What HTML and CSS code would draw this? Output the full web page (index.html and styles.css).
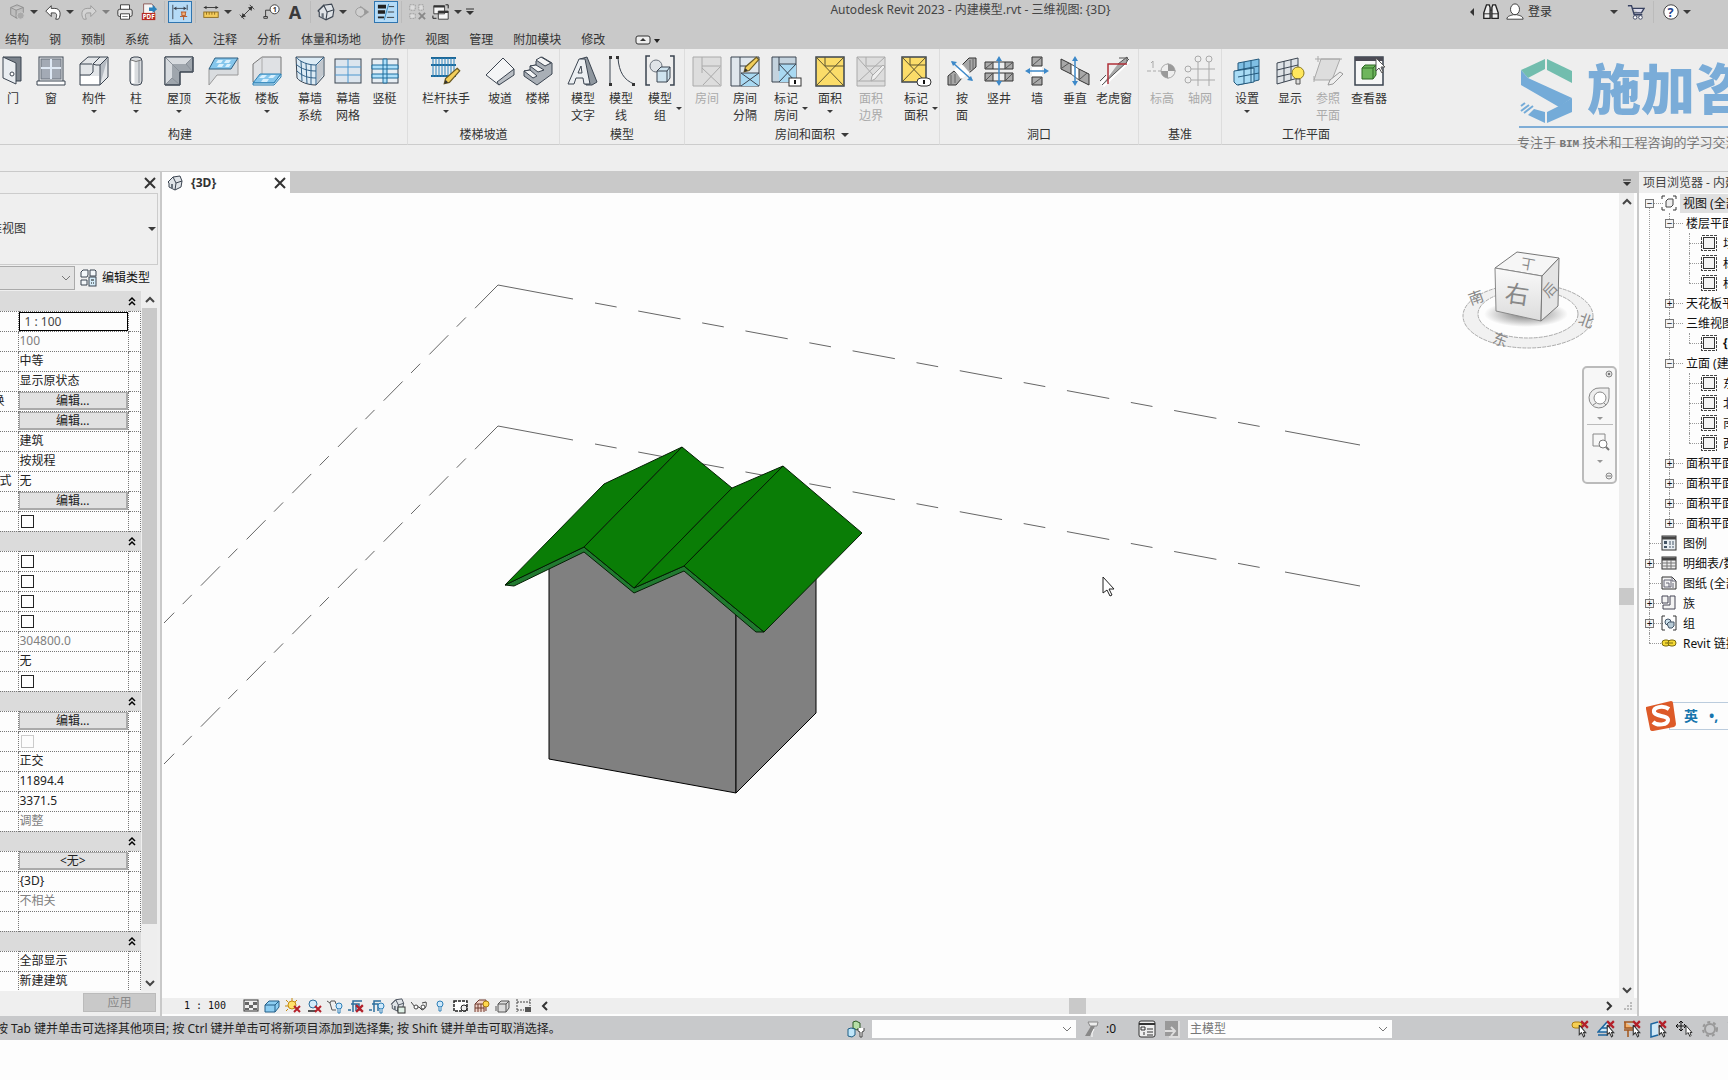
FILE: index.html
```html
<!DOCTYPE html>
<html lang="zh-CN">
<head>
    <meta charset="UTF-8">
    <meta name="viewport" content="width=device-width, initial-scale=1.0">
    <title>Autodesk Revit 2023 - 内建模型.rvt - 三维视图: {3D}</title>
    <link rel="stylesheet" href="styles.css">
</head>
<body>
    <!-- Shared shapes -->
    <svg class="sprite" aria-hidden="true">
        <symbol id="caret" viewBox="0 0 8 6"><path d="M0 1h8L4 5z" fill="#3a3a3a"/></symbol>
        <symbol id="close" viewBox="0 0 12 12"><path d="M1 1l10 10M11 1L1 11" stroke="#333" stroke-width="2" fill="none"/></symbol>
        <symbol id="up" viewBox="0 0 12 12"><path d="M2 8l4-4 4 4" stroke="#444" stroke-width="2" fill="none"/></symbol>
        <symbol id="down" viewBox="0 0 12 12"><path d="M2 4l4 4 4-4" stroke="#444" stroke-width="2" fill="none"/></symbol>
        <symbol id="right" viewBox="0 0 12 12"><path d="M4 2l4 4-4 4" stroke="#333" stroke-width="2" fill="none"/></symbol>
        <symbol id="left" viewBox="0 0 12 12"><path d="M8 2L4 6l4 4" stroke="#333" stroke-width="2" fill="none"/></symbol>
        <symbol id="fold" viewBox="0 0 8 10"><path d="M1 5l3-3 3 3M1 9l3-3 3 3" stroke="#000" stroke-width="1.5" fill="none"/></symbol>
        <symbol id="combo" viewBox="0 0 10 6"><path d="M1 1l4 4 4-4" stroke="#777" fill="none"/></symbol>
        <symbol id="pencil" viewBox="0 0 14 14"><path d="M11 1l2 2-8 9-4 1 1-4z" fill="#f2ce5a" stroke="#6b5a24"/><path d="M1 13l1-3 2 2z" fill="#333"/></symbol>
        <symbol id="house" viewBox="0 0 16 16"><path d="M1 7l5-5 7-1 2 5-1 6-6 3-6-3V8z" fill="#dfe3e7" stroke="#3b4450"/><path d="M1 7l5-5 3 6-1 7M9 8l6-2" fill="none" stroke="#3b4450"/><path d="M4 9h2v5l-2-1z" fill="#69727c"/></symbol>
        <symbol id="cross" viewBox="0 0 8 8"><path d="M1 1l6 6M7 1L1 7" stroke="#b3202a" stroke-width="2" fill="none"/></symbol>
        <symbol id="pointer" viewBox="0 0 8 12"><path d="M1 0v9l2-2 2 4 1-1-1-3h2z" fill="#fff" stroke="#333"/></symbol>
        <symbol id="bulb" viewBox="0 0 8 12"><circle cx="4" cy="4" r="3" fill="#cfe9fb" stroke="#2d7fb8"/><path d="M3 7v4h2V7" fill="#fff" stroke="#2d7fb8"/></symbol>
        <symbol id="plan" viewBox="0 0 16 16"><g shape-rendering="crispEdges"><rect x="0.5" y="0.5" width="15" height="15" fill="none" stroke="#444" stroke-dasharray="3 1"/><rect x="2.5" y="2.5" width="11" height="11" fill="#f4f4f4" stroke="#333"/></g></symbol>
    </svg>

    <header class="titlebar">
        <nav class="quick" aria-label="快速访问工具栏">
            <button aria-label="保存"><svg viewBox="0 0 20 20"><path d="M3 5l7-3 7 3v8l-7 4-7-4zM3 5l6 3 8-3M9 8v9" fill="#bdbdbd" stroke="#8b8b8b"/><circle cx="14" cy="14" r="4" fill="#aaa" stroke="#c9c9c9"/></svg></button>
            <svg class="caret"><use href="#caret"/></svg>
            <button aria-label="放弃"><svg viewBox="0 0 20 20"><path d="M2 9l6-6v3h4c7 0 7 8 4 12h-3c2-5 1-7-2-7H8v4z" fill="#fff" stroke="#333"/></svg></button>
            <svg class="caret"><use href="#caret"/></svg>
            <button aria-label="重做"><svg viewBox="0 0 20 20"><path d="M18 9l-6-6v3H8c-7 0-7 8-4 12h3c-2-5-1-7 2-7h3v4z" fill="#d4d4d4" stroke="#999"/></svg></button>
            <svg class="caret faded"><use href="#caret"/></svg>
            <button aria-label="打印"><svg viewBox="0 0 20 20"><path d="M5 7V2h10v5" fill="#fff" stroke="#333"/><rect x="2" y="7" width="16" height="8" rx="2" fill="#e6e6e6" stroke="#333"/><path d="M5 12h10v6H5z" fill="#fff" stroke="#333"/><path d="M7 15h6" stroke="#777"/></svg></button>
            <button aria-label="导出 PDF"><svg viewBox="0 0 20 20"><path d="M4 1h9l3 3v8H4z" fill="#f5f5f5" stroke="#8a5550"/><path d="M10 5h4V2l5 5-5 4V9h-4z" fill="#2b83bd"/><rect x="2" y="11" width="15" height="8" fill="#b92b20"/><text x="3" y="18" font-size="7" font-weight="700" fill="#fff">PDF</text></svg></button>
            <i class="sep"></i>
            <button class="on" aria-label="激活尺寸"><svg viewBox="0 0 20 20"><path d="M2 2v16M18 2v6M3 6h14" stroke="#3b4450" fill="none"/><path d="M3 6l3-2v4zM17 6l-3-2v4z" fill="#3b4450"/><path d="M11 10h6M12 10v4h4v-4M10 15h8M14 15v4" stroke="#b5541e" fill="#f5b27b"/></svg></button>
            <i class="sep"></i>
            <button aria-label="测量"><svg viewBox="0 0 20 20"><path d="M2 5h16" stroke="#333"/><path d="M2 5l3-2v4zM18 5l-3-2v4z" fill="#333"/><rect x="2" y="10" width="16" height="6" fill="#f3cb5c" stroke="#8c6a1d"/><path d="M5 10v3M8 10v3M11 10v3M14 10v3" stroke="#8c6a1d"/></svg></button>
            <svg class="caret"><use href="#caret"/></svg>
            <button aria-label="对齐尺寸标注"><svg viewBox="0 0 20 20"><path d="M4 16L16 4M2 13l5 5M13 2l5 5" stroke="#333" fill="none"/><path d="M4 16l1-5 4 4zM16 4l-5 1 4 4z" fill="#333"/></svg></button>
            <button aria-label="按类别标记"><svg viewBox="0 0 20 20"><circle cx="14" cy="7" r="5" fill="#fff" stroke="#333"/><text x="12" y="10" font-size="8" font-weight="700" fill="#333">1</text><path d="M9 8H4v7M2 15h4v2H2z" stroke="#333" fill="none"/></svg></button>
            <button class="letter" aria-label="文字">A</button>
            <i class="sep"></i>
            <button aria-label="默认三维视图"><svg viewBox="0 0 16 16"><use href="#house"/></svg></button>
            <svg class="caret"><use href="#caret"/></svg>
            <button aria-label="剖面"><svg viewBox="0 0 20 20"><path d="M8 3l10 7-10 7z" fill="#999"/><circle cx="8" cy="10" r="5" fill="#cfcfcf" stroke="#999"/></svg></button>
            <button class="on" aria-label="细线"><svg viewBox="0 0 20 20"><path d="M1 4h9M1 10h8" stroke="#222" stroke-width="4"/><path d="M1 16h7" stroke="#222" stroke-width="2"/><path d="M13 4h6M12 10h7M11 16h8" stroke="#333"/><path d="M13 1L8 19" stroke="#2b83bd"/></svg></button>
            <i class="sep"></i>
            <button aria-label="关闭非活动视图"><svg viewBox="0 0 20 20"><path d="M2 2h6v6H2zM12 2h5v6h-5zM2 12h6v5H2z" fill="#ddd" stroke="#999" stroke-dasharray="2 1"/><path d="M12 11l7 7M19 11l-7 7" stroke="#888" stroke-width="2"/></svg></button>
            <button aria-label="切换窗口"><svg viewBox="0 0 20 20"><path d="M2 3h12v9H2zM7 9h11v9H7z" fill="#f6f6f6" stroke="#333"/><path d="M2 4h12M7 10h11" stroke="#333" stroke-width="2"/><path d="M15 2h3v4M1 14v3h4" stroke="#111" fill="none"/></svg></button>
            <svg class="caret"><use href="#caret"/></svg>
            <svg class="more" viewBox="0 0 10 8"><path d="M1 1h8" stroke="#333"/><path d="M1 3h8L5 7z" fill="#333"/></svg>
        </nav>
        <h1>Autodesk Revit 2023 - 内建模型.rvt - 三维视图: {3D}</h1>
        <div class="account">
            <svg class="tri" viewBox="0 0 6 8"><path d="M5 0v8L1 4z" fill="#333"/></svg>
            <button aria-label="搜索"><svg viewBox="0 0 20 20"><path d="M4 5l1-3h3l1 3v12H2v-6zM16 5l-1-3h-3l-1 3v12h7v-6z" fill="#eee" stroke="#222" stroke-width="1.5"/><path d="M9 8h2M2 12h7M11 12h7" stroke="#222"/></svg></button>
            <button aria-label="用户"><svg viewBox="0 0 20 20"><path d="M1 18c0-4 5-4 7-5h4c2 1 7 1 7 5z" fill="#fff" stroke="#333"/><ellipse cx="10" cy="7" rx="5" ry="6" fill="#fff" stroke="#333"/></svg></button>
            <a href="#login">登录</a>
            <svg class="caret"><use href="#caret"/></svg>
            <button aria-label="应用商店"><svg viewBox="0 0 20 20"><path d="M1 3h4l3 10h9M6 6h13l-3 5H7" fill="#dde" stroke="#37415f" stroke-width="1.5"/><circle cx="9" cy="16" r="2" fill="#fff" stroke="#37415f"/><circle cx="15" cy="16" r="2" fill="#fff" stroke="#37415f"/></svg></button>
            <i class="sep"></i>
            <button aria-label="帮助"><svg viewBox="0 0 20 20"><circle cx="10" cy="10" r="8" fill="#fff" stroke="#333"/><text x="6" y="15" font-size="14" font-weight="700" fill="#26438c">?</text></svg></button>
            <svg class="caret"><use href="#caret"/></svg>
        </div>
    </header>

    <nav class="tabs" aria-label="功能区选项卡">
        <a href="#structure">结构</a><a href="#steel">钢</a><a href="#precast">预制</a><a href="#systems">系统</a><a href="#insert">插入</a><a href="#annotate">注释</a><a href="#analyze">分析</a><a href="#massing">体量和场地</a><a href="#collaborate">协作</a><a href="#view">视图</a><a href="#manage">管理</a><a href="#addins">附加模块</a><a href="#modify">修改</a>
        <button class="minimize" aria-label="最小化功能区"><svg viewBox="0 0 26 10"><rect x="1" y="1" width="14" height="8" rx="2" fill="#eee" stroke="#333"/><path d="M5 6l3-3 3 3z" fill="#333"/><path d="M19 4h6l-3 4z" fill="#222"/></svg></button>
    </nav>

    <section class="ribbon" aria-label="功能区">
        <div class="panel build">
            <div class="tools">
                <button><svg viewBox="0 0 32 32"><path d="M6 2h18v24h-6" fill="#7c848d" stroke="#3b4450"/><path d="M6 2l13 6v21L6 23z" fill="#e9edf1" stroke="#3b4450"/><circle cx="15" cy="19" r="2" fill="#fff" stroke="#3b4450"/></svg>门</button>
                <button><svg viewBox="0 0 32 32"><rect x="4" y="2" width="24" height="25" fill="#eceff2" stroke="#3b4450"/><rect x="6" y="4" width="20" height="20" fill="#a3aab5" stroke="#6b737d"/><path d="M16 4v20M6 13h20" stroke="#dfe9f5" stroke-width="2"/><path d="M2 26h28v4H2z" fill="#fff" stroke="#3b4450"/></svg>窗</button>
                <button><svg viewBox="0 0 32 32"><path d="M2 9l8-7h20v20l-8 8H2z" fill="#e3e6e9" stroke="#3b4450"/><path d="M22 30V10l8-8" fill="#b5bbc2" stroke="#3b4450"/><path d="M2 20h10l3-3V9l7-7M15 9l3 1h4M2 9h12" fill="none" stroke="#3b4450"/><path d="M3 21h18v8H3z" fill="#fff"/></svg>构件<svg class="drop"><use href="#caret"/></svg></button>
                <button><svg viewBox="0 0 32 32"><rect x="10" y="2" width="12" height="28" rx="4" fill="#d9dcdf" stroke="#3b4450"/><path d="M13 6v22" stroke="#fff" stroke-width="3"/><path d="M19 6v22" stroke="#b1b6bc" stroke-width="2"/><path d="M11 5q5 3 10 0" fill="none" stroke="#777"/></svg>柱<svg class="drop"><use href="#caret"/></svg></button>
                <button><svg viewBox="0 0 32 32"><path d="M2 2h28v15H17v13H2z" fill="#9fa6ad" stroke="#3b4450"/><path d="M2 2h28l-7 7H9v14l-7 7z" fill="#d7dbdf"/><path d="M2 2l15 15M2 30l7-7 8 7M30 2l-7 7 7 8" fill="none" stroke="#8a9199"/><path d="M2 2h28v15H17v13H2z" fill="none" stroke="#3b4450"/></svg>屋顶<svg class="drop"><use href="#caret"/></svg></button>
                <button><svg viewBox="0 0 32 32"><path d="M2 14v16l8-10h21V3" fill="#d9dcdf" stroke="#999"/><path d="M8 3h23l-7 11H2z" fill="#85c6ec" stroke="#2f5f80"/><path d="M11 5h5l-2 3h-5zM19 5h5l-2 3h-5zM12 9h5l-2 3h-5zM20 9h4l-2 3h-4z" fill="#d9f0fd"/></svg>天花板</button>
                <button><svg viewBox="0 0 32 32"><path d="M2 9l9-7h19v17l-7 8H2z" fill="#dfe1e4" stroke="#777"/><path d="M11 2v17" stroke="#aaa"/><path d="M9 19h21l-7 9H2z" fill="#85c6ec" stroke="#2b7fb2"/><path d="M2 28v2h21l7-8v-3l-7 9z" fill="#d3eefc" stroke="#2b7fb2"/><path d="M11 20h5l-3 3h-5zM20 20h5l-3 3h-5zM12 24h6l-2 3h-6z" fill="#d9f0fd"/></svg>楼板<svg class="drop"><use href="#caret"/></svg></button>
                <button><svg viewBox="0 0 32 32"><path d="M2 2h28v19l-8 9C14 30 6 27 3 23z" fill="#dcebf5" stroke="#3b4450"/><path d="M2 2c4 5 12 8 20 8v20M30 2l-8 8M2 9c5 5 12 7 20 7M3 16c5 5 11 7 19 7M7 6l1 20M12 8l1 21M17 10v20" fill="none" stroke="#2f5f86"/><path d="M23 10l6-6v16l-6 8z" fill="#c2c7cd"/></svg>幕墙<br>系统</button>
                <button><svg viewBox="0 0 32 32"><rect x="3" y="4" width="26" height="24" fill="#dce5ee" stroke="#3b4450"/><path d="M16 4v24M3 12h26M3 20h26" stroke="#4c97cf"/></svg>幕墙<br>网格</button>
                <button><svg viewBox="0 0 32 32"><rect x="3" y="4" width="26" height="24" fill="#e8eef3" stroke="#3b4450"/><path d="M3 10h26v4H3zM3 19h26v4H3zM14 4h4v24h-4z" fill="#aee0fa" stroke="#1f6d9c"/></svg>竖梃</button>
            </div>
            <h2>构建</h2>
        </div>
        <div class="panel stair">
            <div class="tools">
                <button><svg viewBox="0 0 32 32"><path d="M1 3h25M1 10h25M1 21h25" stroke="#1d6797" stroke-width="2"/><path d="M3 3v19M6 3v19M9 3v19M12 3v19M15 3v19M18 3v19M21 3v19M24 3v19" stroke="#2b83bd"/><use href="#pencil" x="13" y="12" width="18" height="18"/></svg>栏杆扶手<svg class="drop"><use href="#caret"/></svg></button>
                <button><svg viewBox="0 0 32 32"><path d="M2 20L19 3l11 11-15 16z" fill="#f4f5f6" stroke="#3b4450"/><path d="M30 14v6L15 30l-2-3z" fill="#b9bec4" stroke="#3b4450"/></svg>坡道</button>
                <button><svg viewBox="0 0 32 32"><path d="M2 16l6-1v-4l6-1V6l6-4 10 6v11L15 30l-13-9z" fill="#a9afb6" stroke="#3b4450"/><path d="M14 5l5-3 10 6-6 3zM8 11l6-1 8 5-6 2zM2 16l6-1 7 6-4 2z" fill="#f4f5f6" stroke="#3b4450"/></svg>楼梯</button>
            </div>
            <h2>楼梯坡道</h2>
        </div>
        <div class="panel model">
            <div class="tools">
                <button><svg viewBox="0 0 32 32"><path d="M13 4l7-2 10 25-5 3h-6z" fill="#8f979f" stroke="#3b4450"/><path d="M1 29L12 4h6l5 25h-6l-1-6H9l-2 6zM11 18h4l-1-7z" fill="#eceff2" stroke="#3b4450" fill-rule="evenodd"/></svg>模型<br>文字</button>
                <button><svg viewBox="0 0 32 32"><path d="M5 3v26M13 3c1 14 6 22 16 26" fill="none" stroke="#3b4450"/><path d="M4 1h3v3H4zM4 28h3v3H4zM11 1h3v3h-3zM27 28h3v3h-3z" fill="#333"/></svg>模型<br>线</button>
                <button class="split"><svg viewBox="0 0 32 32"><path d="M6 1H2v29h4M26 1h4v29h-4" fill="none" stroke="#3b4450" stroke-width="1.5"/><circle cx="12" cy="11" r="6" fill="#dfe3e7" stroke="#6b737d"/><path d="M13 16l4-4h9v11l-3 4H13z" fill="#cfe3ee" stroke="#3b4450"/><path d="M13 16h10v11M23 16l3-4" fill="none" stroke="#3b4450"/></svg><span class="two"><span>模型<br>组</span><svg class="drop"><use href="#caret"/></svg></span></button>
            </div>
            <h2>模型</h2>
        </div>
        <div class="panel room">
            <div class="tools">
                <button disabled><svg viewBox="0 0 32 32"><path d="M2 2h28v29H2z" fill="#ddd" stroke="#aaa"/><path d="M11 2v16M11 11h19M11 13l18 17M29 12L12 30" fill="none" stroke="#aaa"/></svg>房间</button>
                <button><svg viewBox="0 0 32 32"><path d="M2 2h28v29H2z" fill="#dfe6ec" stroke="#3b4450"/><path d="M12 18h18v13H12z" fill="#a9d9f2"/><path d="M11 2v29M11 11h6M12 18h18M12 18l18 13M30 18L12 31" fill="none" stroke="#3b4450"/><use href="#pencil" x="14" y="1" width="17" height="17"/></svg>房间<br>分隔</button>
                <button class="split"><svg viewBox="0 0 32 32"><path d="M2 2h24v25H2z" fill="#c4d3de" stroke="#3b4450"/><path d="M9 9h17v18H9z" fill="#a9d9f2"/><path d="M9 2v14M9 9h17M9 9l17 18M26 9L9 27" fill="none" stroke="#3b4450"/><rect x="19" y="23" width="12" height="8" fill="#fff" stroke="#333"/><path d="M25 25v4" stroke="#111" stroke-width="2"/></svg><span class="two"><span>标记<br>房间</span><svg class="drop"><use href="#caret"/></svg></span></button>
                <button><svg viewBox="0 0 32 32"><path d="M2 2h28v29H2z" fill="#fbdc69" stroke="#3b4450" stroke-width="1.5"/><path d="M2 2l28 29M30 2L2 31M11 2v9M11 11h19" fill="none" stroke="#5d5430"/></svg>面积<svg class="drop"><use href="#caret"/></svg></button>
                <button disabled><svg viewBox="0 0 32 32"><path d="M2 2h28v29H2z" fill="#ddd" stroke="#aaa"/><path d="M2 2l16 18M30 2L4 26M11 2v9h19M2 26h28" fill="none" stroke="#aaa"/><path d="M28 10l2 2-10 12-4 2 1-5z" fill="#eee" stroke="#aaa"/></svg>面积<br>边界</button>
                <button class="split"><svg viewBox="0 0 32 32"><path d="M2 2h24v25H2z" fill="#fbdc69" stroke="#3b4450" stroke-width="1.5"/><path d="M2 2l24 25M26 2L2 27M10 2v8h16" fill="none" stroke="#5d5430"/><rect x="17" y="23" width="14" height="8" rx="4" fill="#fff" stroke="#333"/><path d="M24 25v4" stroke="#111" stroke-width="2"/></svg><span class="two"><span>标记<br>面积</span><svg class="drop"><use href="#caret"/></svg></span></button>
            </div>
            <h2>房间和面积 <svg class="caret"><use href="#caret"/></svg></h2>
        </div>
        <div class="panel opening">
            <div class="tools">
                <button><svg viewBox="0 0 32 32"><path d="M30 3v9l-7 6-7-8 7-7zM2 30v-9l6-5 8 7-6 7z" fill="#a7a7a7" stroke="#333"/><path d="M24 5v10M27 4v10M5 20v9M9 19v9" stroke="#666"/><path d="M8 15l8-6 8 9-9 6z" fill="#fff"/><path d="M6 7l20 18" stroke="#3d89c9" stroke-width="1.5"/><path d="M5 6l6 1-4 4zM27 26l-6-1 4-4z" fill="#3d89c9"/></svg>按<br>面</button>
                <button><svg viewBox="0 0 32 32"><path d="M2 7h8v7H2zM22 7h8v7h-8zM2 18h8v8H2zM22 18h8v8h-8z" fill="#aaa" stroke="#333"/><path d="M10 7h12M10 14h12M10 18h12M10 26h12" stroke="#333"/><path d="M3 13l6-5M23 13l6-5M3 25l6-6M23 25l6-6" stroke="#555"/><path d="M16 3v26" stroke="#3d89c9" stroke-width="1.5"/><path d="M16 1l3 5h-6zM16 31l3-5h-6z" fill="#3d89c9"/></svg>竖井</button>
                <button><svg viewBox="0 0 32 32"><path d="M11 2h10v28H11z" fill="#fff"/><path d="M11 2h10v9H11zM11 22h10v8H11z" fill="#aaa" stroke="#333"/><path d="M12 10l8-7M12 29l8-6" stroke="#555"/><path d="M6 16h20" stroke="#3d89c9" stroke-width="1.5"/><path d="M4 16l5-3v6zM28 16l-5-3v6z" fill="#3d89c9"/></svg>墙</button>
                <button><svg viewBox="0 0 32 32"><path d="M2 4l28 14v12L2 14z" fill="#fff"/><path d="M2 4l10 5v10L2 14zM20 14l10 5v11l-10-5z" fill="#a7a7a7" stroke="#333"/><path d="M3 13l7-5M21 24l7-6M12 9l8 5M12 19l8 6" stroke="#555"/><path d="M16 3v26" stroke="#3d89c9" stroke-width="1.5"/><path d="M16 1l3 5h-6zM16 31l3-5h-6z" fill="#3d89c9"/></svg>垂直</button>
                <button><svg viewBox="0 0 32 32"><path d="M4 30L30 5" stroke="#fff" stroke-width="6"/><path d="M22 9l7-7M26 9l5-5M2 26l6-6M21 3h9L13 20" stroke="#555" fill="none"/><path d="M20 9l9-7v5L4 30" fill="#a7a7a7" stroke="#555"/><path d="M10 29V9h19" fill="none" stroke="#b03039" stroke-width="1.5"/></svg>老虎窗</button>
            </div>
            <h2>洞口</h2>
        </div>
        <div class="panel datum">
            <div class="tools">
                <button disabled><svg viewBox="0 0 32 32"><path d="M1 16h4M7 16h3M12 16h18M7 6v7M5 8l2-2M22 8v16" stroke="#aaa" fill="none"/><circle cx="22" cy="16" r="7" fill="#eee" stroke="#aaa"/><path d="M22 16V9a7 7 0 0 1 7 7zM22 16v7a7 7 0 0 1-7-7z" fill="#999"/></svg>标高</button>
                <button disabled><svg viewBox="0 0 32 32"><path d="M14 7v24M25 7v24M7 14h24M7 25h24" stroke="#aaa"/><g fill="#eee" stroke="#aaa"><circle cx="14" cy="4" r="3"/><circle cx="25" cy="4" r="3"/><circle cx="4" cy="14" r="3"/><circle cx="4" cy="25" r="3"/></g></svg>轴网</button>
            </div>
            <h2>基准</h2>
        </div>
        <div class="panel plane">
            <div class="tools">
                <button><svg viewBox="0 0 32 32"><path d="M7 8l21-4v21L7 30z" fill="#7fbfe4" stroke="#24597c"/><path d="M3 16l20-3v14L6 30l-3-3z" fill="#a9dcf5" stroke="#24597c"/><path d="M13 7v22M20 5v22M7 15l21-4M7 22l21-4" stroke="#24597c"/></svg>设置<svg class="drop"><use href="#caret"/></svg></button>
                <button><svg viewBox="0 0 32 32"><path d="M3 8l21-5v20L3 29z" fill="#dfe3e7" stroke="#3b4450"/><path d="M10 6v21M17 5v20M3 15l21-5M3 22l21-5" stroke="#3b4450"/><circle cx="24" cy="18" r="6" fill="#ffe75c" stroke="#8c7a1d"/><path d="M22 24h4v5h-4z" fill="#ddd" stroke="#555"/></svg>显示</button>
                <button disabled><svg viewBox="0 0 32 32"><path d="M9 4h19L20 25H2zM6 1v6M3 4h27M2 21v6" fill="#ddd" stroke="#aaa"/><path d="M28 17l3 2-10 10-5 1 2-5z" fill="#eee" stroke="#999"/></svg>参照<br>平面</button>
                <button><svg viewBox="0 0 32 32"><path d="M2 2h28v28H2z" fill="#f7f7f7" stroke="#3b4450" stroke-width="1.5"/><path d="M2 4h28" stroke="#4b4b55" stroke-width="4"/><path d="M9 13l3-3h11v10l-3 4H9z" fill="#6eb55c" stroke="#2f6b25"/><path d="M9 13h11v11M20 13l3-3" fill="none" stroke="#2f6b25"/><path d="M23 3v13l3-3 3 5 1-1-2-5h4z" fill="#fff" stroke="#555"/></svg>查看器</button>
            </div>
            <h2>工作平面</h2>
        </div>
        <div class="brand">
            <div class="brand-name">
                <svg viewBox="0 0 54 66"><path d="M2 12L26 1v10L9 20z" fill="#72bdae"/><path d="M28 1l25 12v12L28 12z" fill="#72bdae"/><path d="M2 12l7 8 44 20-13 9L2 27z" fill="#74abd8"/><path d="M53 40v14L28 65V54l12-6z" fill="#74abd8"/><path d="M26 54v11l-17-8 6-6z" fill="#74abd8"/><path d="M2 53l8-6M5 55l9-7M2 48l4-3" stroke="#74abd8" stroke-width="2"/></svg>
                <strong>施加咨询</strong>
            </div>
            <p>专注于 <b>BIM</b> 技术和工程咨询的学习交流</p>
        </div>
    </section>

    <main class="workspace">
        <aside class="properties" aria-label="属性">
            <div class="head"><button aria-label="关闭属性"><svg class="x"><use href="#close"/></svg></button></div>
            <button class="type"><span>三维视图</span><svg class="caret"><use href="#caret"/></svg></button>
            <div class="edit-type">
                <span class="combo"><select aria-label="视图实例"><option></option></select><svg><use href="#combo"/></svg></span>
                <button><svg viewBox="0 0 18 18"><path d="M1 3l2-2h5v5l-1 2H1zM10 1h5l1 1v5h-6zM1 11h6v5H1z" fill="#f3f7fa" stroke="#3b4450"/><rect x="9" y="8" width="7" height="9" fill="#d5ecf9" stroke="#3b4450"/><path d="M11 11h3M11 14h1M13 14h1" stroke="#111"/></svg>编辑类型</button>
            </div>
            <div class="grid">
                <table>
                    <colgroup><col class="c-name"><col><col class="c-link"></colgroup>
                    <tr class="group"><th colspan="3"><svg><use href="#fold"/></svg></th></tr>
                    <tr><td></td><td class="field"><input type="text" value="1 : 100" aria-label="视图比例"></td><td></td></tr>
                    <tr><td></td><td class="dim">100</td><td></td></tr>
                    <tr><td></td><td>中等</td><td></td></tr>
                    <tr><td></td><td>显示原状态</td><td></td></tr>
                    <tr><td><span class="name far">可见性/图形替换</span></td><td class="field"><button>编辑...</button></td><td></td></tr>
                    <tr><td></td><td class="field"><button>编辑...</button></td><td></td></tr>
                    <tr><td></td><td>建筑</td><td></td></tr>
                    <tr><td></td><td>按规程</td><td></td></tr>
                    <tr><td><span class="name">默认分析显示样式</span></td><td>无</td><td></td></tr>
                    <tr><td></td><td class="field"><button>编辑...</button></td><td></td></tr>
                    <tr><td></td><td><input type="checkbox" aria-label="日光路径"></td><td></td></tr>
                    <tr class="group"><th colspan="3"><svg><use href="#fold"/></svg></th></tr>
                    <tr><td></td><td><input type="checkbox" aria-label="裁剪视图"></td><td></td></tr>
                    <tr><td></td><td><input type="checkbox" aria-label="裁剪区域可见"></td><td></td></tr>
                    <tr><td></td><td><input type="checkbox" aria-label="注释裁剪"></td><td></td></tr>
                    <tr><td></td><td><input type="checkbox" aria-label="远剪裁激活"></td><td></td></tr>
                    <tr><td></td><td class="dim">304800.0</td><td></td></tr>
                    <tr><td></td><td>无</td><td></td></tr>
                    <tr><td></td><td><input type="checkbox" aria-label="剖面框"></td><td></td></tr>
                    <tr class="group"><th colspan="3"><svg><use href="#fold"/></svg></th></tr>
                    <tr><td></td><td class="field"><button>编辑...</button></td><td></td></tr>
                    <tr><td></td><td><input type="checkbox" aria-label="锁定的方向" disabled></td><td></td></tr>
                    <tr><td></td><td>正交</td><td></td></tr>
                    <tr><td></td><td>11894.4</td><td></td></tr>
                    <tr><td></td><td>3371.5</td><td></td></tr>
                    <tr><td></td><td class="dim">调整</td><td></td></tr>
                    <tr class="group"><th colspan="3"><svg><use href="#fold"/></svg></th></tr>
                    <tr><td></td><td class="field"><button>&lt;无&gt;</button></td><td></td></tr>
                    <tr><td></td><td>{3D}</td><td></td></tr>
                    <tr><td></td><td class="dim">不相关</td><td></td></tr>
                    <tr><td></td><td></td><td></td></tr>
                    <tr class="group"><th colspan="3"><svg><use href="#fold"/></svg></th></tr>
                    <tr><td></td><td>全部显示</td><td></td></tr>
                    <tr><td></td><td>新建建筑</td><td></td></tr>
                </table>
                <div class="vscroll"><svg><use href="#up"/></svg><i class="thumb"></i><i class="rest"></i><svg><use href="#down"/></svg></div>
            </div>
            <div class="apply"><button disabled>应用</button></div>
        </aside>

        <section class="view" aria-label="三维视图">
            <div class="viewtabs">
                <div class="viewtab"><svg class="home"><use href="#house"/></svg><b>{3D}</b><button aria-label="关闭视图"><svg class="x"><use href="#close"/></svg></button></div>
                <svg class="more" viewBox="0 0 10 8"><path d="M1 1h8" stroke="#333"/><path d="M1 3h8L5 7z" fill="#333"/></svg>
            </div>
            <div class="stage">
                <div class="canvas">
                    <svg class="drawing" viewBox="162 193 1457 805" preserveAspectRatio="xMinYMin meet">
                        <!-- Reference planes -->
                        <g fill="none" stroke="#666">
                            <path d="M498 285l75 14M1285 431l75 14M498 426l75 14M1285 572l75 14"/>
                            <path d="M595 303l668 124M595 444l668 124" stroke-dasharray="22 22 43 22"/>
                            <path d="M498 285l-4 4M498 426l-4 4"/>
                            <path d="M494 289L164 623M494 430L164 764" stroke-dasharray="27 13 13 12"/>
                        </g>
                        <!-- Walls -->
                        <g fill="#808080" stroke="#000" stroke-linejoin="round">
                            <path d="M549 565l35-18 50 41 50-22 52 43v184l-187-34z"/>
                            <path d="M736 609l80-40v144l-80 80z"/>
                        </g>
                        <!-- Roof -->
                        <g stroke="#041f04" stroke-linejoin="round">
                            <path d="M505 585l79-38 50 41 50-22 80 66h-8l-72-61-50 22-50-41-70 34z" fill="#217a30"/>
                            <g fill="#0a7d06">
                                <path d="M505 585l99-101 78-37-98 100z"/>
                                <path d="M584 547l98-100 50 41-98 100z"/>
                                <path d="M634 588l98-100 51-22-99 100z"/>
                                <path d="M684 566l99-100 79 67-98 99z"/>
                            </g>
                        </g>
                        <!-- View cube -->
                        <defs>
                            <linearGradient id="face" x1="0" y1="0" x2="0" y2="1"><stop offset="0" stop-color="#fafafa"/><stop offset="1" stop-color="#dcdcdc"/></linearGradient>
                            <radialGradient id="shade"><stop offset="0" stop-color="#777"/><stop offset="1" stop-color="#fdfdfd"/></radialGradient>
                        </defs>
                        <g>
                            <ellipse cx="1528" cy="316" rx="65" ry="32" fill="#f1f1f1" stroke="#aaa" stroke-dasharray="4 1"/>
                            <ellipse cx="1528" cy="314" rx="50" ry="24" fill="#fdfdfd" stroke="#aaa" stroke-dasharray="4 1"/>
                            <ellipse cx="1526" cy="314" rx="42" ry="13" fill="url(#shade)"/>
                            <path d="M1495 268l22-16 42 6-17 18z" fill="#f6f6f6" stroke="#777"/>
                            <path d="M1495 268l47 8-1 45-45-10z" fill="url(#face)" stroke="#888"/>
                            <path d="M1542 276l17-18-1 48-17 15z" fill="#e4e4e4" stroke="#777"/>
                            <g fill="#888" text-anchor="middle">
                                <text font-size="24" x="1517" y="303" transform="rotate(8 1517 295)">右</text>
                                <text font-size="14" transform="translate(1528 264) rotate(190)" y="5">上</text>
                                <text font-size="14" transform="translate(1550 290) rotate(-45)" y="5">后</text>
                                <text font-size="15" transform="translate(1476 298) rotate(-20)" y="5">南</text>
                                <text font-size="15" transform="translate(1500 340) rotate(20)" y="5">东</text>
                                <text font-size="15" transform="translate(1586 321) rotate(20)" y="5">北</text>
                            </g>
                        </g>
                        <path d="M1103 577v16l4-3 3 6 2-1-3-6h5z" fill="#fff" stroke="#222"/>
                    </svg>
                    <div class="navbar">
                        <svg class="tiny" viewBox="0 0 8 8"><circle cx="4" cy="4" r="3" fill="#ddd" stroke="#888"/><path d="M3 3l2 2M5 3L3 5" stroke="#777"/></svg>
                        <button aria-label="控制盘"><svg viewBox="0 0 24 24"><path d="M12 2h9v10a10 10 0 1 1-9-10z" fill="#eee" stroke="#888"/><circle cx="12" cy="12" r="6" fill="#fff" stroke="#888"/><path d="M8 17l-3 2M16 17l2 2" stroke="#888"/></svg></button>
                        <svg class="caret faded"><use href="#caret"/></svg>
                        <hr>
                        <button aria-label="区域放大"><svg viewBox="0 0 24 24"><path d="M16 16H5V4h12v6" fill="none" stroke="#888"/><circle cx="15" cy="14" r="4" fill="#fff" stroke="#777"/><path d="M18 17l3 3" stroke="#777" stroke-width="2"/></svg></button>
                        <svg class="caret faded"><use href="#caret"/></svg>
                        <svg class="tiny last" viewBox="0 0 8 8"><circle cx="4" cy="4" r="3" fill="#eee" stroke="#888"/><path d="M2 4h4" stroke="#777"/></svg>
                    </div>
                </div>
                <div class="vscroll"><svg><use href="#up"/></svg><i class="gap-a"></i><i class="thumb"></i><i class="gap-b"></i><svg><use href="#down"/></svg></div>
            </div>
            <div class="viewbar">
                <span class="scale">1 : 100</span>
                <button aria-label="详细程度"><svg viewBox="0 0 16 16"><rect x="1" y="2" width="14" height="11" fill="#eee" stroke="#333"/><path d="M2 4h4v3H2zM10 4h4v3h-4zM6 7h4v3H6zM2 10h4v2H2zM10 10h4v2h-4z" fill="#666"/></svg></button>
                <button aria-label="视觉样式"><svg viewBox="0 0 16 16"><path d="M1 7l4-4h10v6l-4 5H1z" fill="#8ccdf2" stroke="#245f88"/><path d="M1 7h10v7M11 7l4-4" fill="none" stroke="#245f88"/></svg></button>
                <button aria-label="日光路径"><svg viewBox="0 0 16 16"><path d="M7 0v3M1 2l2 2M0 8h3M1 13l2-2M12 2l-2 2" stroke="#c48a12"/><circle cx="7" cy="7" r="4" fill="#ffe36a" stroke="#c48a12"/><use href="#cross" x="8" y="7" width="8" height="8"/></svg></button>
                <button aria-label="阴影"><svg viewBox="0 0 16 16"><path d="M2 13h8" stroke="#555" stroke-width="2"/><circle cx="7" cy="6" r="4" fill="#d3ebfa" stroke="#2d6f9e"/><use href="#cross" x="8" y="7" width="8" height="8"/></svg></button>
                <button aria-label="渲染"><svg viewBox="0 0 16 16"><path d="M0 3l3 2 1-2h4l1 3M3 5l2 7h4" fill="none" stroke="#555"/><use href="#bulb" x="8" y="4" width="8" height="12"/></svg></button>
                <button aria-label="裁剪视图"><svg viewBox="0 0 16 16"><path d="M0 12h3M5 14V3h9M3 6h8v7M8 6v7" fill="none" stroke="#2d6f9e" stroke-width="1.5"/><use href="#cross" x="7" y="6" width="9" height="9"/></svg></button>
                <button aria-label="显示裁剪区域"><svg viewBox="0 0 16 16"><path d="M0 12h3M5 14V3h7M3 6h6v7" fill="none" stroke="#2d6f9e" stroke-width="1.5"/><use href="#bulb" x="8" y="4" width="8" height="12"/></svg></button>
                <button aria-label="锁定三维视图"><svg viewBox="0 0 16 16"><use href="#house" width="15" height="14"/><rect x="8" y="9" width="7" height="6" fill="#dff0e6" stroke="#333"/></svg></button>
                <button aria-label="临时隐藏"><svg viewBox="0 0 16 16"><path d="M0 4l4 5h4l3 3c4-1 5-5 4-8l-4 1" fill="none" stroke="#444"/><circle cx="5" cy="9" r="2" fill="#fff" stroke="#444"/><circle cx="12" cy="9" r="2" fill="#fff" stroke="#444"/></svg></button>
                <button aria-label="显示隐藏的图元"><svg viewBox="0 0 16 16"><use href="#bulb" x="4" y="2" width="8" height="12"/></svg></button>
                <button aria-label="临时视图属性"><svg viewBox="0 0 16 16"><path d="M1 3h13v10H1z" fill="#fff" stroke="#222" stroke-width="1.5" stroke-dasharray="3 1"/><circle cx="11" cy="10" r="3" fill="#eee" stroke="#222"/></svg></button>
                <button aria-label="分析模型"><svg viewBox="0 0 16 16"><path d="M1 14V6l4-4h7v11M1 6h9v8M4 6v8M7 6v8M1 10h9" fill="#f1d2c8" stroke="#6f3a2e"/><circle cx="12" cy="6" r="3" fill="#ffd84d" stroke="#a97c10"/></svg></button>
                <button aria-label="高亮位移集"><svg viewBox="0 0 16 16"><path d="M3 6l3-3h8v7l-3 4H3zM3 6h8v8M11 6l3-3M1 8v5" fill="#ddd" stroke="#555"/></svg></button>
                <button aria-label="显示约束"><svg viewBox="0 0 16 16"><path d="M1 1v13M14 1v7M1 4h13M1 12h7" stroke="#444" stroke-dasharray="2 1"/><rect x="9" y="9" width="6" height="5" fill="#555"/></svg></button>
                <button aria-label="收起"><svg viewBox="0 0 12 12"><use href="#left"/></svg></button>
                <div class="hscroll"><i class="track-a"></i><i class="thumb"></i><i class="track-b"></i><svg><use href="#right"/></svg></div>
                <svg class="grip" viewBox="0 0 10 10"><path d="M7 1h2v2H7zM4 4h2v2H4zM7 4h2v2H7zM1 7h2v2H1zM4 7h2v2H4zM7 7h2v2H7z" fill="#bbb"/></svg>
            </div>
        </section>

        <aside class="browser" aria-label="项目浏览器">
            <div class="head">项目浏览器 - 内建模型.rvt</div>
            <ul class="tree">
                <li><div class="node"><button class="toggle" aria-label="收起">−</button><svg viewBox="0 0 16 16"><path d="M4 1H1v3M12 1h3v3M4 15H1v-3M12 15h3v-3" fill="none" stroke="#333"/><path d="M5 6l2-2h5v6l-2 2H5z" fill="#eee" stroke="#444"/></svg><span class="picked">视图 (全部)</span></div>
                    <ul>
                        <li><div class="node sub"><button class="toggle" aria-label="收起">−</button><span>楼层平面</span></div>
                            <ul>
                                <li><div class="node"><svg><use href="#plan"/></svg><span>场地</span></div></li>
                                <li><div class="node"><svg><use href="#plan"/></svg><span>标高 1</span></div></li>
                                <li><div class="node"><svg><use href="#plan"/></svg><span>标高 2</span></div></li>
                            </ul>
                        </li>
                        <li><div class="node sub"><button class="toggle" aria-label="展开">+</button><span>天花板平面</span></div></li>
                        <li><div class="node sub"><button class="toggle" aria-label="收起">−</button><span>三维视图</span></div>
                            <ul>
                                <li><div class="node"><svg><use href="#plan"/></svg><b>{3D}</b></div></li>
                            </ul>
                        </li>
                        <li><div class="node sub"><button class="toggle" aria-label="收起">−</button><span>立面 (建筑立面)</span></div>
                            <ul>
                                <li><div class="node"><svg><use href="#plan"/></svg><span>东</span></div></li>
                                <li><div class="node"><svg><use href="#plan"/></svg><span>北</span></div></li>
                                <li><div class="node"><svg><use href="#plan"/></svg><span>南</span></div></li>
                                <li><div class="node"><svg><use href="#plan"/></svg><span>西</span></div></li>
                            </ul>
                        </li>
                        <li><div class="node sub"><button class="toggle" aria-label="展开">+</button><span>面积平面</span></div></li>
                        <li><div class="node sub"><button class="toggle" aria-label="展开">+</button><span>面积平面</span></div></li>
                        <li><div class="node sub"><button class="toggle" aria-label="展开">+</button><span>面积平面</span></div></li>
                        <li><div class="node sub"><button class="toggle" aria-label="展开">+</button><span>面积平面</span></div></li>
                    </ul>
                </li>
                <li><div class="node"><svg viewBox="0 0 16 16"><rect x="1" y="1" width="14" height="14" fill="#e8eef2" stroke="#333"/><path d="M1 3h14" stroke="#444" stroke-width="3"/><path d="M3 6h3v3H3zM3 11h3v2H3z" fill="#456"/><path d="M8 7h6M8 9h6M8 12h6" stroke="#456" stroke-dasharray="2 1"/></svg><span>图例</span></div></li>
                <li><div class="node"><button class="toggle" aria-label="展开">+</button><svg viewBox="0 0 16 16"><rect x="1" y="2" width="14" height="12" fill="#eee" stroke="#333"/><path d="M1 4h14" stroke="#444" stroke-width="3"/><path d="M1 8h14M1 11h14M6 5v9M10 5v9" stroke="#777"/></svg><span>明细表/数量</span></div></li>
                <li><div class="node"><svg viewBox="0 0 16 16"><path d="M1 2h10l4 4v8H1z" fill="#f3f3f3" stroke="#333"/><path d="M3 5h7v7H3zM5 8h3v4M11 2v4h4M12 8v5" fill="none" stroke="#667"/></svg><span>图纸 (全部)</span></div></li>
                <li><div class="node"><button class="toggle" aria-label="展开">+</button><svg viewBox="0 0 16 16"><path d="M1 1h6v7H1zM9 1h5v13H2v-4h7z" fill="#f3f3f3" stroke="#445"/></svg><span>族</span></div></li>
                <li><div class="node"><button class="toggle" aria-label="展开">+</button><svg viewBox="0 0 16 16"><path d="M4 1H1v14h3M12 1h3v14h-3" fill="none" stroke="#333"/><circle cx="7" cy="7" r="3" fill="#cfe3ee" stroke="#456"/><path d="M6 9l2-2h5v4l-2 2H8z" fill="#b8cbd6" stroke="#456"/></svg><span>组</span></div></li>
                <li><div class="node"><svg viewBox="0 0 16 16"><rect x="1" y="5" width="8" height="6" rx="3" fill="#f5d934" stroke="#7a6a10"/><rect x="7" y="5" width="8" height="6" rx="3" fill="#f5d934" stroke="#7a6a10"/><path d="M4 8h8" stroke="#7a6a10"/></svg><span>Revit 链接</span></div></li>
            </ul>
            <div class="ime"><svg viewBox="0 0 32 32"><path d="M1 7L26 1q2 0 2 2l3 21q0 2-2 3L8 31q-3 0-3-2L1 9z" fill="#dd5a28"/><path d="M24 9C18 5 8 7 9 12s14 3 14 8-11 6-15 2" fill="none" stroke="#fff" stroke-width="4"/></svg><b>英</b><b>•,</b></div>
        </aside>
    </main>

    <footer class="status">
        <p>按 Tab 键并单击可选择其他项目; 按 Ctrl 键并单击可将新项目添加到选择集; 按 Shift 键并单击可取消选择。</p>
        <div class="worksets">
            <svg viewBox="0 0 18 18"><path d="M6 2l3-1 4 2v5l-3 2-4-2z" fill="#b7dfa7" stroke="#2c5b26"/><path d="M1 9l3-1 4 1v6l-3 2-4-1z" fill="#bfe6fa" stroke="#1f5f85"/><path d="M11 8v3l2 1v5h2v-5l2-1V8" fill="#fff" stroke="#444"/></svg>
            <span class="combo"><select aria-label="工作集"><option></option></select><svg><use href="#combo"/></svg></span>
            <svg viewBox="0 0 18 18"><path d="M5 2h10l-1 4H7z" fill="#eee" stroke="#888"/><path d="M8 6h4L7 16H2z" fill="#888"/><path d="M11 9l-2 4v4" stroke="#fff" fill="none"/></svg>
            <span class="count">:0</span>
            <svg class="options" viewBox="0 0 18 18"><rect x="1" y="1" width="16" height="16" rx="2" fill="#eee" stroke="#333"/><path d="M1 4h16" stroke="#333" stroke-width="2"/><path d="M3 7h4v3H3zM9 9h6M6 12v3M9 12h6M9 15h6" fill="none" stroke="#333"/></svg>
            <svg viewBox="0 0 18 18"><path d="M2 1h14v15H2z" fill="#999"/><path d="M2 11h9M8 7l4 4-4 5M16 1v16H6" fill="none" stroke="#ddd" stroke-width="2"/></svg>
            <span class="combo"><select aria-label="设计选项"><option>主模型</option></select><svg><use href="#combo"/></svg></span>
        </div>
        <div class="filters">
            <button aria-label="选择链接"><svg viewBox="0 0 18 18"><rect x="1" y="2" width="10" height="6" rx="3" fill="#f6cf53" stroke="#a97c10"/><use href="#cross" x="9" y="0" width="9" height="9"/><use href="#pointer" x="7" y="5" width="9" height="13"/></svg></button>
            <button aria-label="选择基线图元"><svg viewBox="0 0 18 18"><path d="M10 2L1 12h9M1 15h10M5 8h5" fill="#cfe8f7" stroke="#1c66a0" stroke-width="1.5"/><use href="#cross" x="9" y="0" width="9" height="9"/><use href="#pointer" x="9" y="5" width="9" height="13"/></svg></button>
            <button aria-label="选择锁定图元"><svg viewBox="0 0 18 18"><path d="M1 2h9M2 2v6h8M1 10h9M5 10v7" fill="#f6b26b" stroke="#a3561c" stroke-width="1.5"/><use href="#cross" x="9" y="0" width="9" height="9"/><use href="#pointer" x="9" y="5" width="9" height="13"/></svg></button>
            <button aria-label="按面选择图元"><svg viewBox="0 0 18 18"><path d="M9 2L2 4v13l7-2" fill="#cfe8f7" stroke="#1c66a0" stroke-width="1.5"/><use href="#cross" x="9" y="0" width="9" height="9"/><use href="#pointer" x="9" y="5" width="9" height="13"/></svg></button>
            <button aria-label="选择时拖曳图元"><svg viewBox="0 0 18 18"><path d="M6 1v10M1 6h10M4 3l2-2 2 2M4 9l2 2 2-2M3 4L1 6l2 2M9 4l2 2-2 2" fill="none" stroke="#111"/><use href="#pointer" x="10" y="5" width="8" height="13"/></svg></button>
            <button aria-label="后台进程"><svg viewBox="0 0 18 18"><circle cx="9" cy="9" r="5" fill="none" stroke="#999" stroke-width="2"/><circle cx="9" cy="9" r="7" fill="none" stroke="#999" stroke-width="2" stroke-dasharray="3 3"/></svg></button>
            <button aria-label="过滤器"><svg viewBox="0 0 18 18"><path d="M1 2h16l-6 7v7H7V9z" fill="#ddd" stroke="#555"/></svg></button>
        </div>
    </footer>
</body>
</html>
```

FILE: styles.css
```css
* {
    box-sizing: border-box;
}

body {
    margin: 0;
    min-height: 100vh;
    background: #fdfdfd;
    color: #333;
    font-family: "Noto Sans", "Noto Sans CJK SC", sans-serif;
    font-size: 12px;
    line-height: 16px;
    overflow: hidden;
}

h1, h2, p, ul, hr {
    margin: 0;
    padding: 0;
}

button {
    margin: 0;
    padding: 0;
    border: 0;
    background: none;
    color: inherit;
    font: inherit;
    display: flex;
    align-items: center;
    justify-content: center;
}

a {
    color: inherit;
    text-decoration: none;
}

svg {
    flex: none;
    display: block;
}

.sprite {
    display: none;
}

.caret {
    width: 8px;
    height: 6px;
}

.faded {
    opacity: 0.5;
}

.sep {
    width: 1px;
    height: 22px;
    margin: 0 3px;
    background: #bbb;
}

.more {
    width: 10px;
    height: 8px;
}

.x {
    width: 12px;
    height: 12px;
}

/* Title bar */
.titlebar {
    display: flex;
    align-items: center;
    height: 24px;
    background: #c9c9c9;
}

.quick, .account {
    display: flex;
    align-items: center;
    flex: none;
}

.quick {
    padding-left: 5px;
}

.quick button, .account button {
    width: 24px;
    height: 22px;
}

.quick button svg, .account button svg {
    width: 18px;
    height: 18px;
}

.quick .caret {
    margin: 0 3px 0 1px;
}

.quick .on {
    background: #b5dbf7;
    border: 1px solid #2f75b0;
}

.quick .letter {
    color: #3a3a3a;
    font-size: 18px;
    font-weight: 700;
}

.titlebar h1 {
    flex: 1;
    height: 22px;
    color: #444;
    font-size: 12px;
    font-weight: 400;
    line-height: 18px;
    text-align: center;
    white-space: nowrap;
}

.account {
    width: 262px;
}

.account .tri {
    width: 6px;
    height: 8px;
    margin: 0 4px 0 3px;
}

.account a {
    margin: 0 58px 0 1px;
}

.account .caret {
    margin-right: 6px;
}

.account .sep {
    margin: 0 5px;
}

/* Ribbon tabs */
.tabs {
    display: flex;
    align-items: center;
    gap: 20px;
    height: 25px;
    padding: 6px 5px 0;
    background: #c9c9c9;
    white-space: nowrap;
}

.minimize {
    margin-left: 10px;
}

.minimize svg {
    width: 26px;
    height: 10px;
}

/* Ribbon */
.ribbon {
    position: relative;
    display: flex;
    height: 122px;
    padding-bottom: 26px;
    background: #eee;
    overflow: hidden;
}

.ribbon::after {
    content: "";
    flex: 1;
    border-bottom: 1px solid #ccc;
}

.panel {
    display: flex;
    flex-direction: column;
    justify-content: space-between;
    flex: none;
    border-right: 1px solid #ddd;
    border-bottom: 1px solid #ccc;
}

.panel.plane {
    border-right: 0;
}

.tools {
    display: grid;
    align-items: start;
    padding-top: 6px;
}

.tools button {
    flex-direction: column;
    line-height: 17px;
    white-space: nowrap;
}

.tools button > svg:first-child {
    width: 32px;
    height: 32px;
    margin-bottom: 3px;
}

.tools button:disabled {
    color: #aaa;
}

.tools .drop {
    width: 6px;
    height: 5px;
    margin-top: 2px;
}

.two {
    display: flex;
    align-items: center;
    gap: 4px;
    padding-left: 10px;
}

.panel h2 {
    display: flex;
    align-items: center;
    justify-content: center;
    gap: 6px;
    height: 18px;
    font-size: 12px;
    font-weight: 400;
}

.build .tools {
    grid-template-columns: 26px 50px 36px 48px 38px 50px 38px 48px 28px 45px;
}

.build h2 {
    padding-right: 47px;
}

.stair .tools {
    grid-template-columns: 76px 32px 43px;
}

.model .tools {
    grid-template-columns: 46px 30px 48px;
}

.room .tools {
    grid-template-columns: 44px 32px 50px 38px 44px 46px;
}

.opening .tools {
    grid-template-columns: 44px 30px 46px 30px 48px;
}

.datum .tools {
    grid-template-columns: 46px 30px;
    padding-right: 6px;
}

.plane .tools {
    grid-template-columns: 50px 36px 40px 42px;
}

.brand {
    position: absolute;
    top: 6px;
    right: 0;
    width: 211px;
    overflow: hidden;
    color: #777;
    white-space: nowrap;
}

.brand-name {
    display: flex;
    align-items: center;
    gap: 14px;
    height: 73px;
    margin-left: 2px;
    border-bottom: 2px solid #7fadd6;
}

.brand-name svg {
    width: 54px;
    height: 66px;
}

.brand-name strong {
    height: 64px;
    color: #7aacd8;
    font-size: 54px;
    font-weight: 900;
    line-height: 60px;
}

.brand p {
    padding-top: 5px;
    font-size: 13px;
    line-height: 18px;
}

.brand b {
    font-family: "Liberation Mono", monospace;
    font-size: 11px;
}

/* Workspace */
.workspace {
    display: flex;
    border-top: 1px solid #c9c9c9;
}

.head {
    display: flex;
    align-items: center;
    height: 21px;
    background: #eee;
    white-space: nowrap;
    overflow: hidden;
}

.properties {
    flex: none;
    width: 162px;
    padding-right: 2px;
    background: #efefef;
    border-right: 2px solid #c9c9c9;
}

.properties .head {
    justify-content: flex-end;
    padding-right: 2px;
}

.type {
    width: 158px;
    height: 72px;
    border: 1px solid #ccc;
    border-left: 0;
    justify-content: space-between;
    padding-right: 1px;
}

.type span {
    display: flex;
    justify-content: flex-end;
    width: 26px;
    overflow: hidden;
    white-space: nowrap;
}

.edit-type {
    display: flex;
    align-items: center;
    height: 26px;
}

.edit-type button {
    gap: 4px;
    margin-left: 5px;
    color: #111;
    white-space: nowrap;
}

.edit-type button svg {
    width: 18px;
    height: 18px;
}

.combo {
    position: relative;
    display: flex;
}

.combo svg {
    position: absolute;
    top: 50%;
    right: 4px;
    width: 10px;
    height: 6px;
    margin-top: -3px;
    pointer-events: none;
}

select {
    appearance: none;
    width: 100%;
    margin: 0;
    border: 0;
    border-radius: 0;
    background: #fdfdfd;
    color: #777;
    font: inherit;
}

.edit-type .combo {
    width: 75px;
}

.edit-type select {
    height: 24px;
    background: #e3e3e3;
    border: 1px solid #aaa;
    border-left: 0;
}

.grid {
    display: flex;
    justify-content: space-between;
    height: 700px;
    overflow: hidden;
}

.properties table {
    width: 141px;
    border-collapse: collapse;
    table-layout: fixed;
    background: #fdfdfd;
    color: #222;
}

.c-name {
    width: 18px;
}

.c-link {
    width: 12px;
}

.properties tr {
    height: 20px;
}

.properties td {
    height: 20px;
    padding: 0 0 0 1px;
    border: 1px dotted #777;
    border-left: 0;
    white-space: nowrap;
    line-height: 18px;
}

.properties td:first-child {
    padding: 0;
}

.properties .field {
    padding: 0;
}

.group th {
    padding: 0 5px 0 0;
    background: #dbdbdb;
}

.group svg {
    width: 8px;
    height: 10px;
    margin-left: auto;
}

.properties .dim {
    color: #808080;
}

.name {
    display: flex;
    justify-content: flex-end;
    height: 18px;
    padding-right: 6px;
    overflow: hidden;
}

.far {
    padding-right: 13px;
}

.field button {
    width: 100%;
    height: 18px;
    background: #e1e1e1;
    border: 1px solid #aaa;
    border-right-width: 2px;
    border-bottom-width: 2px;
    line-height: 14px;
}

.field input {
    display: block;
    width: 100%;
    height: 19px;
    padding: 0 5px;
    border: 1px solid #000;
    background: #fdfdfd;
    color: #444;
    font: inherit;
}

input[type="checkbox"] {
    appearance: none;
    display: block;
    width: 13px;
    height: 13px;
    margin: 0 1px;
    border: 1px solid #222;
    background: #fdfdfd;
}

input[type="checkbox"]:disabled {
    border-color: #ccc;
}

.vscroll {
    display: flex;
    flex-direction: column;
    align-items: center;
    width: 15px;
    flex: none;
    background: #eee;
}

.vscroll svg {
    width: 12px;
    height: 12px;
    margin: 3px 0 2px;
}

.thumb {
    background: #c9c9c9;
}

.vscroll .thumb {
    width: 100%;
}

.properties .vscroll {
    margin-right: 1px;
}

.properties .thumb {
    flex: 617;
}

.rest {
    flex: 50;
}

.apply {
    display: flex;
    justify-content: flex-end;
    height: 25px;
    padding: 2px 2px 0 0;
}

.apply button {
    width: 73px;
    height: 19px;
    background: #c9c9c9;
    border: 1px solid #bbb;
    color: #888;
}

/* Drawing view */
.view {
    flex: 1;
    display: flex;
    flex-direction: column;
    min-width: 0;
    padding-bottom: 2px;
}

.viewtabs {
    display: flex;
    align-items: center;
    justify-content: space-between;
    height: 21px;
    padding-right: 5px;
    background: #c9c9c9;
}

.viewtab {
    display: flex;
    align-items: center;
    width: 128px;
    height: 100%;
    padding: 0 4px 0 5px;
    background: #fdfdfd;
}

.viewtab .home {
    width: 16px;
    height: 16px;
    margin-right: 8px;
}

.viewtab button {
    margin-left: auto;
}

.stage {
    flex: 1;
    display: flex;
    padding-right: 3px;
}

.canvas {
    position: relative;
    flex: 1;
}

.drawing {
    position: absolute;
    width: 100%;
    height: 100%;
}

.navbar {
    position: absolute;
    top: 173px;
    right: 2px;
    display: flex;
    flex-direction: column;
    align-items: center;
    width: 35px;
    height: 118px;
    padding: 2px;
    border: 2px solid #bbb;
    border-radius: 5px;
    background: #f7f7f7;
}

.navbar button svg {
    width: 24px;
    height: 24px;
}

.navbar button {
    margin: 8px 0 6px;
}

.navbar hr {
    width: 26px;
    margin-top: 3px;
    border: 0;
    border-top: 1px solid #bbb;
}

.navbar hr + button {
    margin: 5px 0 5px;
}

.tiny {
    width: 8px;
    height: 8px;
    align-self: flex-end;
}

.navbar .caret {
    width: 6px;
    height: 5px;
}

.navbar .last {
    margin-top: auto;
}

.gap-a {
    flex: 377;
}

.stage .thumb {
    flex: none;
    height: 17px;
}

.gap-b {
    flex: 376;
}

.viewbar {
    display: flex;
    align-items: center;
    gap: 5px;
    height: 16px;
    padding-right: 4px;
    background: #eee;
}

.scale {
    width: 76px;
    padding-left: 22px;
    color: #111;
    font-family: "DejaVu Sans Mono", monospace;
    font-size: 10px;
    white-space: nowrap;
}

.viewbar button, .viewbar button svg {
    width: 16px;
    height: 16px;
}

.viewbar button:last-of-type svg {
    width: 12px;
    height: 12px;
}

.hscroll {
    flex: 1;
    display: flex;
    align-items: center;
    height: 100%;
}

.hscroll svg {
    width: 12px;
    height: 12px;
    margin-right: 3px;
}

.track-a {
    flex: 512;
}

.track-b {
    flex: 519;
}

.hscroll .thumb {
    width: 17px;
    height: 100%;
}

.grip {
    width: 10px;
    height: 10px;
}

/* Project browser */
.browser {
    position: relative;
    flex: none;
    width: 91px;
    border-left: 2px solid #c9c9c9;
    overflow: hidden;
    color: #111;
    white-space: nowrap;
}

.browser .head {
    padding-left: 4px;
    color: #444;
}

.tree ul {
    padding-left: 20px;
}

.tree, .tree ul {
    list-style: none;
}

.tree {
    padding-left: 6px;
    width: 240px;
}

.tree li {
    position: relative;
}

/* dotted guide down to the next sibling */
.tree li::before {
    content: "";
    position: absolute;
    top: 0;
    bottom: 0;
    left: 4px;
    border-left: 1px dotted #999;
}

.tree li:last-child::before {
    bottom: auto;
    height: 10px;
}

.tree > li:first-child::before {
    top: 10px;
}

.node {
    position: relative;
    display: flex;
    align-items: center;
    height: 20px;
    padding-left: 16px;
}

.sub {
    padding-left: 18px;
}

.node::before {
    content: "";
    position: absolute;
    top: 10px;
    left: 4px;
    width: 14px;
    border-top: 1px dotted #999;
}

.toggle {
    position: absolute;
    top: 6px;
    left: 0;
    width: 9px;
    height: 9px;
    border: 1px solid #777;
    background: #f3f3f3;
    font-size: 10px;
    line-height: 7px;
}

.node svg {
    position: relative;
    width: 16px;
    height: 16px;
    margin-right: 3px;
}

.node span {
    padding: 0 3px;
    line-height: 19px;
}

.node b {
    padding: 0 3px;
}

.picked {
    background: #e0e0e0;
}

.ime {
    position: absolute;
    top: 528px;
    left: 6px;
    display: flex;
    align-items: center;
    gap: 7px;
    width: 140px;
    color: #1775ad;
    font-size: 14px;
}

.ime::before {
    content: "";
    position: absolute;
    z-index: -1;
    left: 24px;
    right: 0;
    height: 26px;
    border: 1px solid #bcd;
    background: #fdfdfd;
}

.ime svg {
    width: 32px;
    height: 32px;
}

.ime b + b {
    margin-left: 4px;
}

/* Status bar */
.status {
    display: flex;
    align-items: center;
    height: 24px;
    padding-top: 1px;
    background: #c8c9cb;
    color: #222;
    overflow: hidden;
    white-space: nowrap;
}

.status p {
    width: 847px;
    flex: none;
    text-indent: -4px;
}

.worksets, .filters {
    display: flex;
    align-items: center;
}

.worksets {
    flex: 1;
    gap: 7px;
}

.worksets > svg, .filters svg {
    width: 18px;
    height: 18px;
}

.worksets .combo {
    width: 204px;
}

.worksets select {
    height: 18px;
    padding: 0 2px;
}

.count {
    width: 16px;
    margin-left: -2px;
    color: #111;
}

.options {
    margin-left: 9px;
}

.filters {
    gap: 8px;
    flex: none;
    width: 157px;
}
```
